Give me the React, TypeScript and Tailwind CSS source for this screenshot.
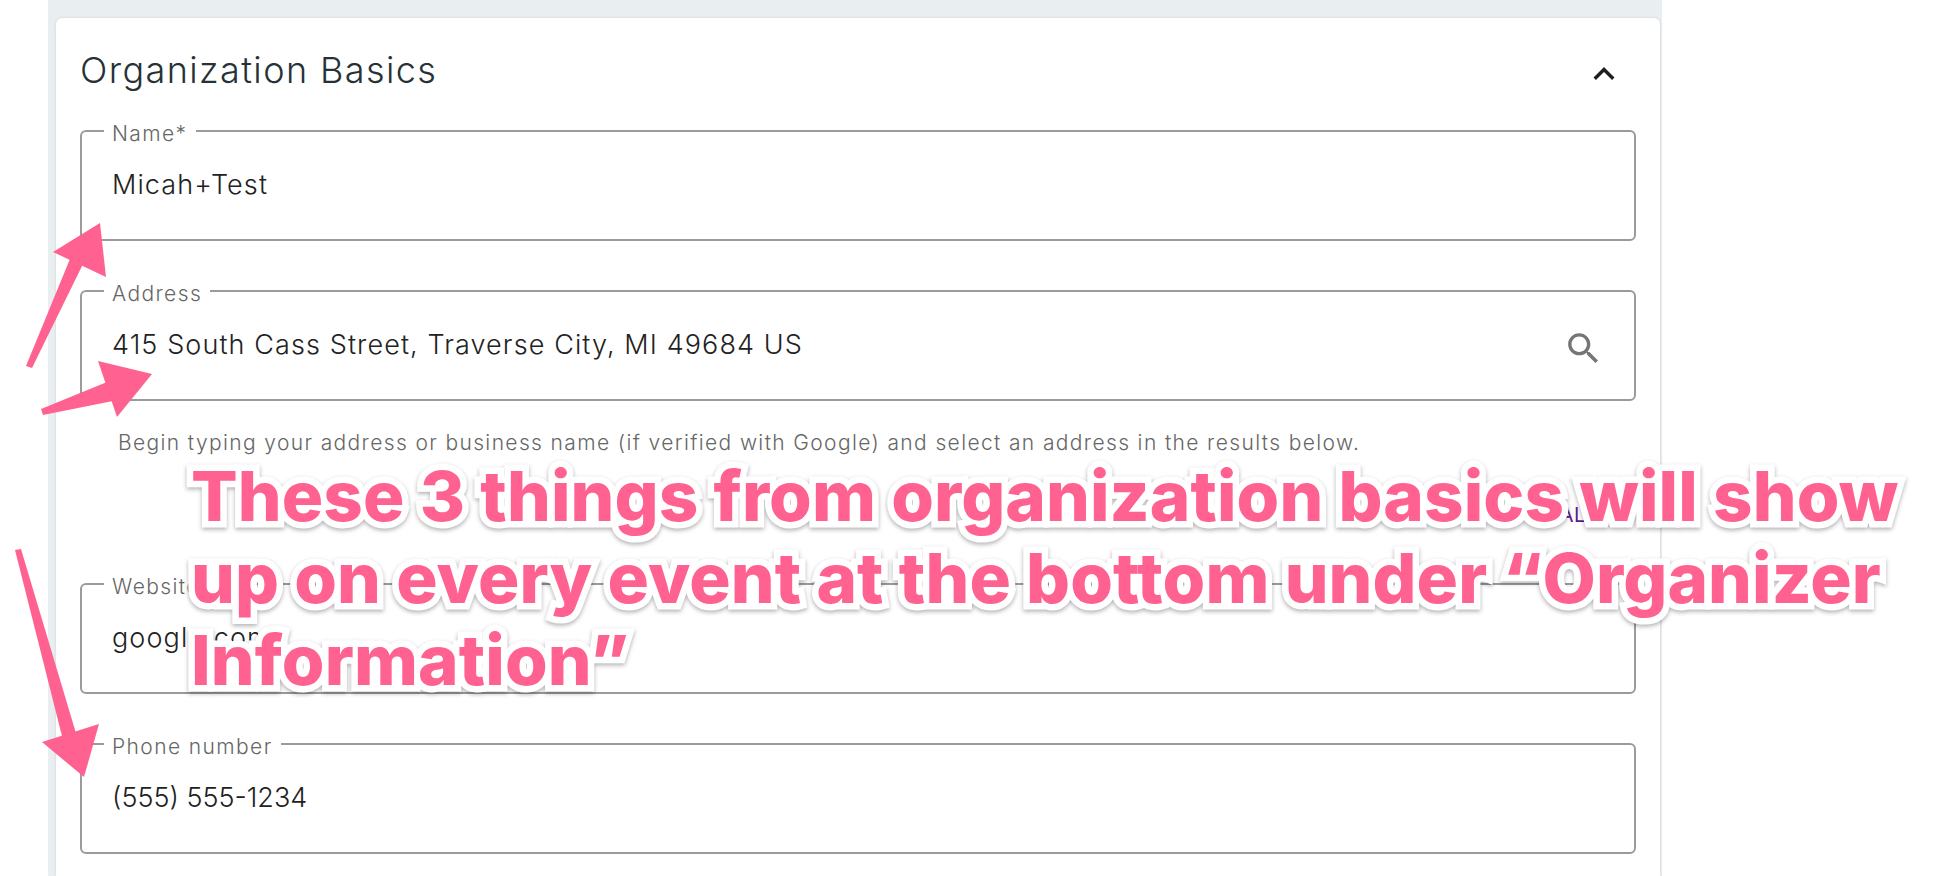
const body = { fontFamily: 'Inter, "Noto Sans", sans-serif' };

function Field({ label, value, mt, search, tight }: { label: string; value: string; mt: string; search?: boolean; tight?: boolean }) {
  return (
    <fieldset className={`${mt} rounded-[6px] border-[2px] border-[#9b9b9b] pl-[30px] pr-[30px]`}>
      <legend className="-ml-[8px] translate-y-[3px] px-[8px] text-[21px] font-light leading-[6px] tracking-[1.4px] text-[#666]">{label}</legend>
      <div className={`flex h-[105px] items-center justify-between pb-[2px] text-[27px] font-light text-[#222] ${tight ? 'tracking-[0px]' : 'tracking-[1.1px]'}`}>
        <span>{value}</span>
        {search && (
          <svg viewBox="0 0 24 24" className="mt-[6px] h-[41px] w-[41px] fill-[#757575]">
            <path d="M15.5 14h-.79l-.28-.27C15.41 12.59 16 11.11 16 9.5 16 5.91 13.09 3 9.5 3S3 5.91 3 9.5 5.91 16 9.5 16c1.61 0 3.09-.59 4.23-1.57l.27.28v.79l5 4.99L20.49 19l-4.99-5zm-6 0C7.01 14 5 11.99 5 9.5S7.01 5 9.5 5 14 7.01 14 9.5 11.99 14 9.5 14z" />
          </svg>
        )}
      </div>
    </fieldset>
  );
}

function Arrows() {
  return (
    <svg viewBox="0 0 200 800" className="absolute left-0 top-0 h-[800px] w-[200px] fill-[#ff6190]">
      <polygon points="26,366 32,368 84,262 72,254" />
      <polygon points="100,223 53,252 106,277" />
      <polygon points="41,409 43,415 118,400 112,380" />
      <polygon points="152,374 98,361 117,417" />
      <polygon points="15,550 21,549 78,740 64,744" />
      <polygon points="84,777 42,742 99,724" />
    </svg>
  );
}

export default function App() {
  return (
    <div className="relative h-[876px] w-[1942px] overflow-hidden bg-white" style={body}>
      <div className="ml-[48px] h-full w-[1614px] bg-[#e9eef1] pl-[8px] pr-[2px] pt-[18px]">
        <div className="h-full rounded-t-[6px] bg-white px-[24px] shadow-[0_0_3px_rgba(0,0,0,0.12)]">
          <div className="flex h-[110px] items-center justify-between pb-[6px] pr-[11px]">
            <h1 className="text-[36px] font-light tracking-[1.4px] text-[#263238]">Organization Basics</h1>
            <svg viewBox="0 0 24 24" className="mt-[8px] h-[42px] w-[42px] fill-[#1f1f1f]">
              <path d="M12 8l-6 6 1.41 1.41L12 10.83l4.59 4.58L18 14z" />
            </svg>
          </div>
          <Field label="Name*" value="Micah+Test" mt="mt-0" />
          <Field label="Address" value="415 South Cass Street, Traverse City, MI 49684 US" mt="mt-[47px]" search />
          <p className="mt-[30px] pl-[38px] text-[21px] font-light leading-[24px] tracking-[1.37px] text-[#666]">
            Begin typing your address or business name (if verified with Google) and select an address in the results below.
          </p>
          <div className="mt-[48px] flex justify-end pr-[50px] text-[20px] font-normal leading-[24px] tracking-[0.6px] text-[#5b1a8f]">
            MANUAL
          </div>
          <Field label="Website" value="google.com" mt="mt-[54px]" />
          <Field label="Phone number" value="(555) 555-1234" mt="mt-[47px]" tight />
        </div>
      </div>

      <Arrows />

      {/* callout text on top of the form */}
      <div className="absolute left-[191px] top-[455px] w-[1730px] text-[69px] font-extrabold leading-[82px] tracking-[0.1px] text-[#ff6190] [-webkit-text-stroke:13px_white] [filter:drop-shadow(0_2px_2px_rgba(0,0,0,0.3))] [paint-order:stroke_fill]">
        These 3 things from organization basics will show up on every event at the bottom under “Organizer Information”
      </div>
    </div>
  );
}
